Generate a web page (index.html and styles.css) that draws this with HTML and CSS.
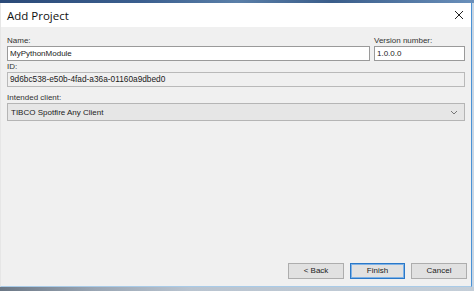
FILE: index.html
```html
<!DOCTYPE html>
<html>
<head>
<meta charset="utf-8">
<link rel="stylesheet" href="styles.css">
</head>
<body>
<div class="screen">
  <div class="desk-top"></div>
  <div class="window">
    <div class="titlebar">
      <span class="title">Add Project</span>
      <svg class="close" width="10" height="10" viewBox="0 0 10 10"><path d="M1 1L9 9M9 1L1 9" stroke="#222" stroke-width="1" fill="none"/></svg>
    </div>
    <div class="content">
      <div class="row-two">
        <div class="field">
          <label class="lbl">Name:</label>
          <div class="input">MyPythonModule</div>
        </div>
        <div class="field">
          <label class="lbl">Version number:</label>
          <div class="input">1.0.0.0</div>
        </div>
      </div>
      <div class="field">
        <label class="lbl">ID:</label>
        <div class="input readonly id">9d6bc538-e50b-4fad-a36a-01160a9dbed0</div>
      </div>
      <div class="field client">
        <label class="lbl">Intended client:</label>
        <div class="select">
          <span>TIBCO Spotfire Any Client</span>
          <svg class="chev" width="8" height="5" viewBox="0 0 8 5"><path d="M1 1L4 4L7 1" stroke="#777" stroke-width="1" fill="none"/></svg>
        </div>
      </div>
      <div class="buttons">
        <div class="btn">&lt; Back</div>
        <div class="btn primary">Finish</div>
        <div class="btn">Cancel</div>
      </div>
    </div>
  </div>
  <div class="taskbar"></div>
</div>
</body>
</html>
```
FILE: styles.css
```css
html, body {
  margin: 0;
  padding: 0;
  background: #c9d6e3;
}
.screen {
  width: 474px;
  height: 291px;
  overflow: hidden;
  display: flex;
  flex-direction: column;
  font-family: "Liberation Sans", Arial, sans-serif;
  font-size: 8px;
  color: #222;
}
.desk-top {
  height: 3px;
  background: linear-gradient(90deg, #2b4a78 0%, #3b5f8f 30%, #5a7fa8 50%, #3a5d8a 70%, #6a90bb 100%);
}
.window {
  flex: 1;
  display: flex;
  flex-direction: column;
  margin-right: 2px;
  border-right: 1px solid #4a92d6;
  border-left: 1px solid #e6e6e6;
  border-bottom: 1px solid #a9cbe8;
}
.titlebar {
  height: 24px;
  background: #fff;
  display: flex;
  align-items: center;
  justify-content: space-between;
  padding: 0 7px 0 6px;
}
.title {
  font-family: "Open Sans", "Noto Sans", sans-serif;
  font-size: 11.5px;
  color: #111;
}
.close {
  display: block;
}
.content {
  flex: 1;
  background: #f0f0f0;
  display: flex;
  flex-direction: column;
  padding: 8px 6px 7px 6px;
}
.row-two {
  display: grid;
  grid-template-columns: 1fr 91px;
  gap: 4px;
}
.field {
  display: flex;
  flex-direction: column;
}
.field.client {
  margin-top: 5px;
}
.lbl {
  height: 11px;
  line-height: 11px;
  color: #333;
}
.input {
  height: 13px;
  line-height: 13px;
  border: 1px solid #9a9a9a;
  background: #fff;
  padding: 0 2px;
  color: #222;
}
.input.readonly {
  background: #f0f0f0;
  border-color: #b9b9b9;
}
.input.id {
  font-size: 8.3px;
}
.select {
  height: 16px;
  border: 1px solid #b5b5b5;
  background: #e6e6e6;
  display: flex;
  align-items: center;
  justify-content: space-between;
  padding: 0 6px 0 3px;
}
.chev {
  display: block;
}
.buttons {
  margin-top: auto;
  margin-right: -2px;
  display: flex;
  justify-content: flex-end;
  gap: 6px;
}
.btn {
  height: 14px;
  line-height: 14px;
  border: 1px solid #adadad;
  background: #e1e1e1;
  text-align: center;
  width: 54px;
}
.btn.primary {
  border: 1px solid #2a78c8;
  box-shadow: inset 0 0 0 1px #7fb2e6;
  width: 53px;
}
.taskbar {
  height: 4px;
  background: linear-gradient(90deg, #6b7785 0%, #9aa6b4 20%, #b9c4d0 40%, #c4ced8 100%);
}
```
